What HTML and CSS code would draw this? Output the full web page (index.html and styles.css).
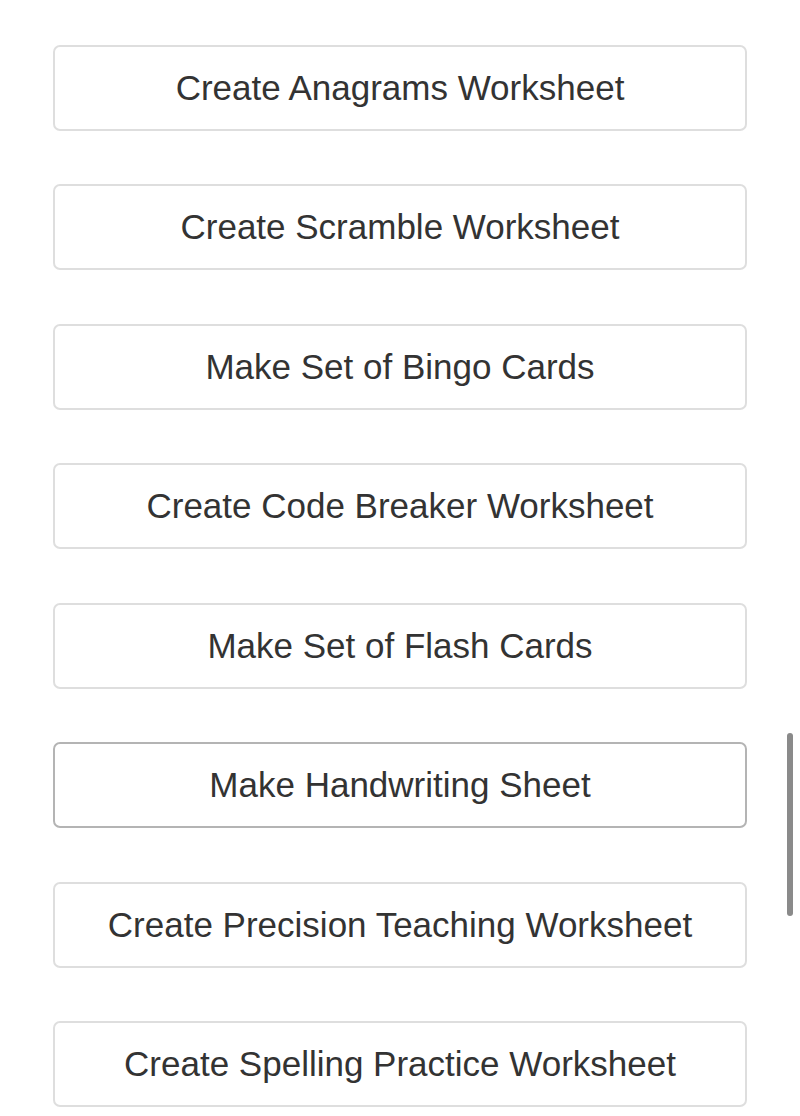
FILE: index.html
```html
<!DOCTYPE html>
<html>
<head>
<meta charset="utf-8">
<link rel="stylesheet" href="styles.css">
</head>
<body>
<div class="list">
  <div class="btn">Create Anagrams Worksheet</div>
  <div class="btn">Create Scramble Worksheet</div>
  <div class="btn">Make Set of Bingo Cards</div>
  <div class="btn">Create Code Breaker Worksheet</div>
  <div class="btn">Make Set of Flash Cards</div>
  <div class="btn btn-active">Make Handwriting Sheet</div>
  <div class="btn">Create Precision Teaching Worksheet</div>
  <div class="btn">Create Spelling Practice Worksheet</div>
</div>
<div class="scrollbar"></div>
</body>
</html>
```
FILE: styles.css
```css
html, body {
  margin: 0;
  padding: 0;
  background: #ffffff;
  height: 1116px;
  overflow: hidden;
}
body {
  position: relative;
  font-family: "Liberation Sans", Arial, sans-serif;
}
.list {
  display: flex;
  flex-direction: column;
  gap: 53.43px;
  padding: 45px 53px 0 53px;
}
.btn {
  box-sizing: border-box;
  height: 86px;
  width: 694px;
  border: 2px solid #dedede;
  border-radius: 7px;
  display: flex;
  align-items: center;
  justify-content: center;
  font-size: 35px;
  color: #333333;
}
.btn-active {
  border-color: #b4b4b4;
}
.scrollbar {
  position: absolute;
  left: 787px;
  top: 733px;
  width: 6px;
  height: 183px;
  border-radius: 3px;
  background: #8a8a8a;
}
```
